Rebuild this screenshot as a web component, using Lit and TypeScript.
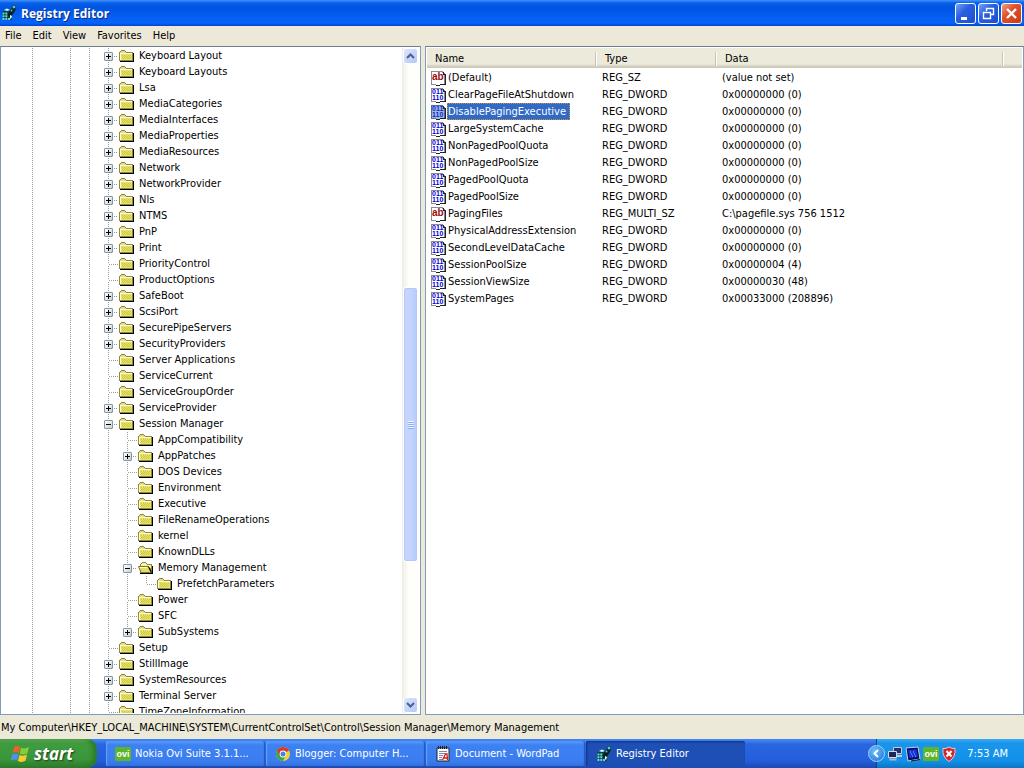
import { LitElement, html, css, svg, nothing } from "lit";
import { customElement, property, state } from "lit/decorators.js";
import { classMap } from "lit/directives/class-map.js";

type NodeState = "leaf" | "closed" | "open";
interface TreeNode { label: string; level: number; state: NodeState; last?: boolean; selected?: boolean; }
interface RegValue { name: string; type: string; data: string; }

const n = (label: string, state: NodeState = "leaf", level = 0, last = false, selected = false): TreeNode =>
  ({ label, state, level, last, selected });

const TREE: TreeNode[] = [
  n("Keyboard Layout", "closed"), n("Keyboard Layouts", "closed"), n("Lsa", "closed"),
  n("MediaCategories", "closed"), n("MediaInterfaces", "closed"), n("MediaProperties", "closed"),
  n("MediaResources", "closed"), n("Network", "closed"), n("NetworkProvider", "closed"),
  n("Nls", "closed"), n("NTMS", "closed"), n("PnP", "closed"), n("Print", "closed"),
  n("PriorityControl"), n("ProductOptions"), n("SafeBoot", "closed"), n("ScsiPort", "closed"),
  n("SecurePipeServers", "closed"), n("SecurityProviders", "closed"), n("Server Applications"),
  n("ServiceCurrent"), n("ServiceGroupOrder"), n("ServiceProvider", "closed"),
  n("Session Manager", "open"), n("AppCompatibility", "leaf", 1), n("AppPatches", "closed", 1),
  n("DOS Devices", "leaf", 1), n("Environment", "leaf", 1), n("Executive", "leaf", 1),
  n("FileRenameOperations", "leaf", 1), n("kernel", "leaf", 1), n("KnownDLLs", "leaf", 1),
  n("Memory Management", "open", 1, false, true), n("PrefetchParameters", "leaf", 2, true),
  n("Power", "leaf", 1), n("SFC", "leaf", 1), n("SubSystems", "closed", 1, true),
  n("Setup"), n("StillImage", "closed"), n("SystemResources", "closed"),
  n("Terminal Server", "closed"), n("TimeZoneInformation"),
];

const dword = (name: string, data = "0x00000000 (0)"): RegValue => ({ name, type: "REG_DWORD", data });
const VALUES: RegValue[] = [
  { name: "(Default)", type: "REG_SZ", data: "(value not set)" },
  dword("ClearPageFileAtShutdown"), dword("DisablePagingExecutive"), dword("LargeSystemCache"),
  dword("NonPagedPoolQuota"), dword("NonPagedPoolSize"), dword("PagedPoolQuota"), dword("PagedPoolSize"),
  { name: "PagingFiles", type: "REG_MULTI_SZ", data: "C:\\pagefile.sys 756 1512" },
  dword("PhysicalAddressExtension"), dword("SecondLevelDataCache"),
  dword("SessionPoolSize", "0x00000004 (4)"), dword("SessionViewSize", "0x00000030 (48)"),
  dword("SystemPages", "0x00033000 (208896)"),
];

const icon = (body: unknown, size = 16) => html`<svg width=${size} height=${size} viewBox="0 0 16 16" aria-hidden="true">${body}</svg>`;

const folderIcon = icon(svg`<g shape-rendering="crispEdges">
  <path d="M2 13h13v1H2z M15 5h1v9h-1z" fill="#000"/>
  <path d="M1 4h1V3h1V2h4v1h1v1h7v9H1z" fill="#8c8a3c"/>
  <path d="M2 4h1V3h4v1h1v1h6v7H2z" fill="#e6e066"/>
  <path d="M2 5h12v1H3v6H2z" fill="#fffce0"/>
  <path d="M4 7h1v1H4zM6 7h1v1H6zM8 7h1v1H8zM10 7h1v1h-1zM12 7h1v1h-1zM5 8h1v1H5zM7 8h1v1H7zM9 8h1v1H9zM11 8h1v1h-1zM4 9h1v1H4zM6 9h1v1H6zM8 9h1v1H8zM10 9h1v1h-1zM12 9h1v1h-1zM5 10h1v1H5zM7 10h1v1H7zM9 10h1v1H9zM11 10h1v1h-1z" fill="#cfc84c"/>
</g>`);

const folderOpenIcon = icon(svg`<g shape-rendering="crispEdges">
  <path d="M3 13h13v1H3z M15 6h1v8h-1z" fill="#000"/>
  <path d="M3 4h1V3h1V2h4v1h1v1h5v9H3z" fill="#8c8a3c"/>
  <path d="M4 4h1V3h4v1h1v1h4v3H4z" fill="#f6f2a0"/>
</g><path d="M1.500 6.500h9.500l3 6H4z" fill="#e2dc62" stroke="#77762f"/><path d="M2.800 7.500h7.500" stroke="#fffce0"/><path d="M11.500 6.500l3 6" stroke="#000"/>`);

const page = (frame: string, fill: string) => svg`<g shape-rendering="crispEdges">
  <path d="M0 1h12v1h1v1h1v12H9v1H5v-1H0z" fill="${frame}"/>
  <path d="M1 2h10v1h1v1h1v10H9v1H5v-1H1z" fill="${fill}"/>
  <path d="M12 2h1v2h2v11h-3v-1h2V5h-2z M9 14h3v1H9z M5 15h4v1H5z" fill="#222"/></g>`;
const stringIcon = icon(svg`${page("#8b8b8b", "#fff")}<text x="1" y="10" class="glyph" font-size="10" fill="#9c0c12">ab</text>`);
const binaryIcon = (sel: boolean) => icon(svg`${page(sel ? "#4a6da0" : "#8b8b8b", sel ? "#9db8e6" : "#fff")}
  <text x="1" y="7" class="glyph" font-size="7" fill=${sel ? "#1524c4" : "#0000d8"}>011</text>
  <text x="1" y="13" class="glyph" font-size="7" fill=${sel ? "#1524c4" : "#0000d8"}>110</text>`);

const regeditIcon = icon(svg`
  <path d="M1 7l4-2 6 1v9H2z" fill="#0b3b3c"/>
  <path d="M1.500 7.500h2v2h-2zM4.300 7.500h2v2h-2zM7.100 7.500h2v2h-2zM1.500 10.200h2v2h-2zM4.300 10.200h2v2h-2zM1.500 12.900h2v2h-2zM4.300 12.900h2v2h-2zM7.100 12.900h2v2h-2z" fill="#5fe0dc"/>
  <path d="M3 5l3-1.500L9 5l-3 1z" fill="#d5fffb"/>
  <path d="M7 8l4-5 4-1-1 4-4 6-3-1z" fill="#062022"/>
  <path d="M11 1l3-1 1 3-3 1zM9 5l2-1 1 2-2 1zM12.500 6l2-1" fill="#58c9c9" stroke="#04282a" stroke-width=".6"/>
  <path d="M9 10l2 1-1 3-1-1z" fill="#fff"/>`);

const oviIcon = icon(svg`<rect y="1" width="16" height="14" rx="1" fill="#5db52c"/><text x="8" y="11" text-anchor="middle" class="glyph" font-size="9" fill="#fff">ovi</text>`);

const chromeIcon = icon(svg`<circle cx="8" cy="8" r="7" fill="#f4cf35"/>
  <path d="M8 8L1.940 4.500A7 7 0 0 1 14.060 4.500z" fill="#d93a2c"/>
  <path d="M1.940 4.500A7 7 0 0 0 8 15L10.800 9.600 8 8z" fill="#3da552"/>
  <path d="M1.940 4.500L5 9.700 8 5h6.300z" fill="#d93a2c"/>
  <circle cx="8" cy="8" r="3.400" fill="#fff"/><circle cx="8" cy="8" r="2.500" fill="#4b83d8"/>`);

const wordpadIcon = icon(svg`<path d="M2 2h12v13H2z" fill="#fff" stroke="#222"/>
  <path d="M3.500 0v3M5.500 0v3M7.500 0v3M9.500 0v3M11.500 0v3" stroke="#222"/>
  <path d="M4 5.500h8M4 7.500h7M4 9.500h4M4 11.500h3M4 13.500h3" stroke="#7a86b8"/>
  <path d="M7.500 14L10.500 8h1.500l.5 6M9 12h3.500" fill="none" stroke="#d21c1c" stroke-width="1.300"/>`);

const flagIcon = html`<svg width="20" height="20" viewBox="0 0 20 20" aria-hidden="true">
  <path d="M4 3.500Q7 1 10 3L8.700 9Q5.800 7 2.500 9.200z" fill="#f0602a"/>
  <path d="M11 3.500Q14 5.500 19 3L17.400 9.200Q13 11.500 9.700 9.500z" fill="#86cc3e"/>
  <path d="M2.200 10.500Q5.400 8.500 8.400 10.400L7 16.500Q4 14.500 .6 16.700z" fill="#4f92ee"/>
  <path d="M9.400 10.900Q12.400 12.700 17 10.500L15.500 16.800Q11.400 19 8 17z" fill="#fbc932"/></svg>`;

const networkIcon = icon(svg`<path d="M6.500 1.500h8v6h-8z" fill="#23306e" stroke="#c4c8d4"/><path d="M9 10h6" stroke="#c4c8d4" stroke-width="2"/>
  <path d="M1.500 5.500h8v6h-8z" fill="#1b2658" stroke="#d8dae2"/><path d="M2.500 13.500h7" stroke="#b5b8c6" stroke-width="2"/>`);
const displayIcon = icon(svg`<path d="M1 2l12-1 2 12-12 2z" fill="#0a0a50" stroke="#c8cff0"/><path d="M3 4l8.500-.8L13 11l-8.500 1z" fill="#1236dc"/>
  <path d="M5 6h1M8 6h1M6 8h1M9 8h1M7 10h1M10 10h1" stroke="#8fb2ff"/><path d="M6 15l9-1.500" stroke="#111"/>`);
const shieldIcon = icon(svg`<path d="M8 1Q11 3 14 2.500Q15 11 8 15.500Q1 11 2 2.500Q5 3 8 1z" fill="#d3252b" stroke="#e9c6c6"/>
  <path d="M5.500 5l5 5.500M10.500 5l-5 5.500" stroke="#fff" stroke-width="2"/>`);

const sharedText = css`
  * { box-sizing: border-box; }
  button { font: inherit; color: inherit; border: 0; padding: 0; margin: 0; background: none; }
  svg { display: block; flex: none; }
  .glyph { font-family: "Liberation Sans", sans-serif; font-weight: 700; }
`;

@customElement("reg-tree")
class RegTree extends LitElement {
  @state() private selected = "Memory Management";
  static styles = [sharedText, css`
    :host { display: flex; min-width: 0; min-height: 0; overflow: hidden; background: #fff; border: 1px solid #7f9db9; border-top-color: #6f7f8f; padding: 1px 1px 1px 0; }
    .rows { flex: 1; min-width: 0; overflow: hidden; list-style: none; margin: 0; padding: 0 0 0 22px; }
    .row { display: flex; height: 16px; align-items: center; line-height: 16px; white-space: nowrap; }
    .cell { flex: none; width: 19px; height: 16px; display: flex; align-items: center; justify-content: center; }
    .line, .last { background: repeating-linear-gradient(#9a9a9a 0 1px, #fff 1px 2px) 9px 0 / 1px 100% no-repeat; }
    .last { background-size: 1px 50%; }
    .branch { flex: none; width: 19px; height: 16px; display: flex; align-items: center; justify-content: flex-end; }
    .branch::after { content: ""; width: 10px; height: 1px; background: repeating-linear-gradient(90deg, #fff 0 1px, #9a9a9a 1px 2px); }
    .branch.box::after { width: 5px; }
    .toggle { width: 9px; height: 9px; border: 1px solid #7898b5; border-radius: 1px; display: block; background: linear-gradient(#000, #000) center / 5px 1px no-repeat, linear-gradient(135deg, #fff, #d2cebf); }
    .toggle.plus { background: linear-gradient(#000, #000) center / 5px 1px no-repeat, linear-gradient(#000, #000) center / 1px 5px no-repeat, linear-gradient(135deg, #fff, #d2cebf); }
    .label { padding: 0 2px; margin-left: 3px; }
    .bar { flex: none; width: 17px; display: flex; flex-direction: column; background: linear-gradient(90deg, #eeede5, #fefefb 40%); padding-left: 1px; }
    .step { width: 15px; height: 16px; border: 1px solid #fff; border-radius: 3px; background: linear-gradient(135deg, #dbe6ff, #b2c8f8); display: grid; place-items: center; }
    .before { flex: 224; } .after { flex: 135; }
    .thumb { flex: 274; width: 15px; border: 1px solid #fff; border-radius: 3px; background: linear-gradient(90deg, #c9d6fc, #c3d3fd 60%, #b6c9f8); box-shadow: 0 0 0 1px #b4c8f6 inset; display: grid; place-items: center; }
    .grip { width: 6px; height: 8px; background: repeating-linear-gradient(#eef4fe 0 1px, #8cb0f8 1px 2px); }
  `];
  private row(t: TreeNode) {
    const guides = [true, false, true, true];
    for (let i = 0; i < t.level; i++) guides.push(true);
    return html`<li class="row" role="treeitem" aria-level=${t.level + 1} aria-selected=${t.label === this.selected} @click=${() => (this.selected = t.label)}>
      ${guides.map((g) => html`<span class=${classMap({ cell: true, line: g })}></span>`)}
      <span class=${classMap({ branch: true, box: t.state !== "leaf", line: !t.last, last: !!t.last })}>
        ${t.state === "leaf" ? nothing : html`<button class=${classMap({ toggle: true, plus: t.state === "closed" })} aria-label="Toggle ${t.label}"></button>`}
      </span>${t.selected ? folderOpenIcon : folderIcon}<span class="label">${t.label}</span></li>`;
  }
  render() {
    return html`<ul class="rows" role="tree" aria-label="Registry keys">${TREE.map((t) => this.row(t))}</ul>
      <div class="bar">
        <button class="step" aria-label="Scroll up"><svg width="9" height="6" viewBox="0 0 9 6"><path d="M1 5l3.500-3.500L8 5" fill="none" stroke="#4d6185" stroke-width="2"/></svg></button>
        <div class="before"></div><div class="thumb"><div class="grip"></div></div><div class="after"></div>
        <button class="step" aria-label="Scroll down"><svg width="9" height="6" viewBox="0 0 9 6"><path d="M1 1l3.500 3.500L8 1" fill="none" stroke="#4d6185" stroke-width="2"/></svg></button>
      </div>`;
  }
}

@customElement("reg-values")
class RegValues extends LitElement {
  @state() private selected = "DisablePagingExecutive";
  static styles = [sharedText, css`
    :host { display: block; min-width: 0; min-height: 0; overflow: hidden; background: #fff; border: 1px solid #7f9db9; border-top-color: #6f7f8f; padding: 1px 1px 0 1px; }
    table { width: 100%; border-collapse: separate; border-spacing: 0; table-layout: fixed; }
    th { height: 20px; padding: 1px 0 0 8px; text-align: left; font-weight: 400; background: linear-gradient(#ebeadb 0 16px, #e2dece 17px, #d6d2c2 18px, #cbc7b8 20px); }
    th span { display: block; height: 14px; line-height: 14px; }
    .sep span { border-right: 1px solid #c7c5b2; box-shadow: 1px 0 0 #fff; margin-right: 1px; }
    .name { width: 170px; } .type { width: 120px; } .data { width: auto; } .rest { width: 18px; }
    .spacer td { height: 1px; padding: 0; }
    td { height: 17px; padding: 0 0 0 5px; white-space: nowrap; line-height: 17px; }
    td:first-child { padding-left: 4px; }
    .item { display: flex; align-items: center; height: 17px; }
    .text { height: 17px; padding: 0 3px 0 0; border: 1px solid transparent; line-height: 15px; }
    .on .text { background: #316ac5; color: #fff; border: 1px dotted #d08d3f; }
  `];
  render() {
    return html`<table aria-label="Values">
      <thead><tr><th class="name sep"><span>Name</span></th><th class="type sep"><span>Type</span></th><th class="data sep"><span>Data</span></th><th class="rest"></th></tr></thead>
      <tbody><tr class="spacer" aria-hidden="true"><td colspan="4"></td></tr>
      ${VALUES.map((v) => html`<tr class=${classMap({ on: v.name === this.selected })} @click=${() => (this.selected = v.name)}>
        <td><div class="item">${v.type === "REG_DWORD" ? binaryIcon(v.name === this.selected) : stringIcon}<span class="text">${v.name}</span></div></td>
        <td>${v.type}</td><td colspan="2">${v.data}</td></tr>`)}
      </tbody></table>`;
  }
}

@customElement("xp-taskbar")
class XpTaskbar extends LitElement {
  @property() time = "7:53 AM";
  static styles = [sharedText, css`
    :host { display: flex; height: 29px; color: #fff; background: linear-gradient(#3f86ee 0, #3a80f0 2px, #2a66e0 5px, #245ddb 22px, #1c49b0 29px); }
    .start { width: 97px; flex: none; display: flex; align-items: center; gap: 4px; padding-left: 10px; border-radius: 0 10px 10px 0; font: italic 700 17px/24px "Open Sans", sans-serif; text-shadow: 1px 1px 2px #1c3d10; background: linear-gradient(#6fb56c 0, #3f9c3f 4px, #3a963a 20px, #2c7a2c 29px); box-shadow: inset -4px 0 5px #2a7a2c; }
    .tasks { flex: 1; min-width: 0; display: flex; gap: 1px; padding: 2px 0 2px 9px; }
    .task { flex: 0 1 159px; min-width: 0; display: flex; align-items: center; gap: 4px; padding-left: 9px; border-radius: 2px; white-space: nowrap; background: linear-gradient(#5f9bfa 0, #3c81f3 4px, #3b7df0 20px, #3370dd 25px); box-shadow: inset 1px 0 1px #6aa4fb, inset -1px 0 1px #2558b8; }
    .task.active { padding: 1px 0 0 10px; background: #1e4fb5; box-shadow: inset 1px 1px 2px #12337e; }
    .tray { flex: none; display: flex; align-items: center; gap: 2px; padding-right: 16px; background: linear-gradient(#3fa9f5 0, #1996ec 4px, #1290e8 22px, #0f74c4 29px); border-left: 1px solid #10408f; }
    .expand { width: 17px; height: 17px; border-radius: 50%; margin-left: -9px; background: radial-gradient(circle at 40% 35%, #6cc0fb, #1b6fd8); border: 1px solid #a5d4fa; display: grid; place-items: center; }
    .clock { padding-left: 8px; }
  `];
  render() {
    const tasks: [unknown, string, boolean][] = [
      [oviIcon, "Nokia Ovi Suite 3.1.1...", false], [chromeIcon, "Blogger: Computer H...", false],
      [wordpadIcon, "Document - WordPad", false], [regeditIcon, "Registry Editor", true],
    ];
    return html`<button class="start">${flagIcon}<span>start</span></button>
      <div class="tasks">${tasks.map(([i, t, a]) => html`<button class=${classMap({ task: true, active: a })}>${i}<span>${t}</span></button>`)}</div>
      <div class="tray"><button class="expand" aria-label="Show hidden icons"><svg width="7" height="9" viewBox="0 0 7 9"><path d="M5 1L1.500 4.500 5 8" fill="none" stroke="#fff" stroke-width="2"/></svg></button>
      ${networkIcon}${displayIcon}${oviIcon}${shieldIcon}<time class="clock">${this.time}</time></div>`;
  }
}

@customElement("app-root")
class AppRoot extends LitElement {
  static styles = [sharedText, css`
    :host { display: flex; flex-direction: column; height: 100vh; overflow: hidden; background: #ece9d8; color: #000; font-family: "DejaVu Sans Condensed", "Noto Sans", sans-serif; font-size: 11px; line-height: 16px; }
    .title { height: 26px; flex: none; display: flex; align-items: center; gap: 4px; padding: 0 2px 0 1px; color: #fff; background: linear-gradient(#3d95ff 0, #0a5fe8 3px, #0054e3 8px, #0560f4 18px, #0463fb 23px, #0046c8 26px); }
    .title h1 { flex: 1; margin: 0; padding-top: 1px; font: 700 12px/20px "Open Sans", sans-serif; text-shadow: 1px 1px 0 #0a2a80; }
    .controls { display: flex; gap: 2px; }
    .ctl { width: 21px; height: 21px; border: 1px solid #fff; border-radius: 3px; background: linear-gradient(135deg, #7aa2f2, #2a5fe0 40%, #1c4fd0); display: grid; place-items: center; }
    .ctl.close { background: linear-gradient(135deg, #f0a084, #e0512c 40%, #c93c14); }
    .menu { height: 20px; flex: none; display: flex; align-items: center; gap: 11px; padding: 0 5px; }
    .panes { flex: 1; min-height: 0; display: grid; grid-template-columns: 421px minmax(0, 1fr); gap: 4px; }
    .status { height: 24px; flex: none; padding: 5px 1px 3px; white-space: nowrap; }
  `];
  render() {
    return html`<header class="title">${regeditIcon}<h1>Registry Editor</h1>
      <div class="controls">
        <button class="ctl" aria-label="Minimize"><svg width="15" height="15" viewBox="0 0 15 15"><path d="M3 11h6v3H3z" fill="#fff"/></svg></button>
        <button class="ctl" aria-label="Restore"><svg width="15" height="15" viewBox="0 0 15 15"><path d="M5.500 5V2.500h7v6H10M5 2.500h8M2.500 6.500h7v6h-7zM2 6.500h8" fill="none" stroke="#fff" stroke-width="1.400"/></svg></button>
        <button class="ctl close" aria-label="Close"><svg width="15" height="15" viewBox="0 0 15 15"><path d="M3 3l9 9M12 3l-9 9" stroke="#fff" stroke-width="2.400"/></svg></button>
      </div></header>
      <nav class="menu">${["File", "Edit", "View", "Favorites", "Help"].map((m) => html`<button>${m}</button>`)}</nav>
      <main class="panes"><reg-tree></reg-tree><reg-values></reg-values></main>
      <footer class="status">My Computer\\HKEY_LOCAL_MACHINE\\SYSTEM\\CurrentControlSet\\Control\\Session Manager\\Memory Management</footer>
      <xp-taskbar></xp-taskbar>`;
  }
}
